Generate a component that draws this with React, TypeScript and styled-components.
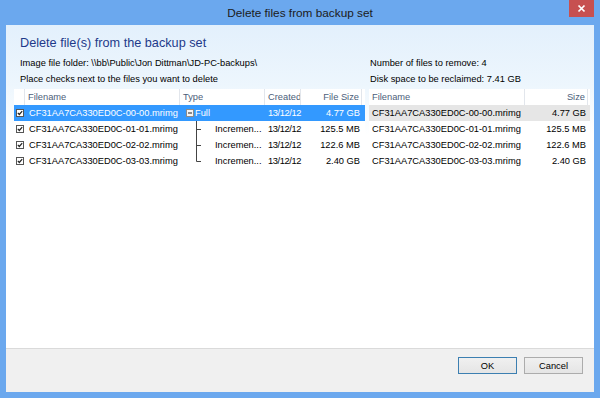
import React, { FC } from 'react';
import styled, { createGlobalStyle } from 'styled-components';

const GlobalStyle = createGlobalStyle`
    html, body {
        margin: 0;
        padding: 0;
    }
    body {
        font-family: "Segoe UI", "Liberation Sans", Arial, sans-serif;
    }
`;

const FONT = '9.3px';

const Window = styled.div`
    width: 600px;
    height: 398px;
    box-sizing: border-box;
    background: #6ba8ee;
    padding: 0 6px 6px 6px;
    display: flex;
    flex-direction: column;
`;

const TitleBar = styled.div`
    height: 25px;
    flex: none;
    display: grid;
    grid-template-columns: 1fr auto 1fr;
    align-items: start;
`;

const Title = styled.div`
    grid-column: 2;
    padding-top: 6px;
    line-height: 15px;
    font-size: 11.8px;
    color: #1b1b1b;
`;

const CloseButton = styled.div`
    grid-column: 3;
    justify-self: end;
    width: 25px;
    height: 17px;
    background: #c75050;
    display: flex;
`;

const Client = styled.div`
    flex: 1;
    display: flex;
    flex-direction: column;
    background: #fff;
    min-height: 0;
`;

const Main = styled.div`
    flex: 1;
    display: flex;
    flex-direction: column;
    padding: 10px 4px 0 8px;
    background: linear-gradient(to bottom, #e3f0fc 0px, #edf6fd 60px, #ffffff 110px);
    min-height: 0;
`;

const Heading = styled.h1`
    margin: 0;
    padding-left: 6px;
    font-size: 12.7px;
    font-weight: normal;
    line-height: 17px;
    color: #1e3a8a;
`;

const Info = styled.div`
    display: grid;
    grid-template-columns: 356px 1fr;
    margin-top: 3px;
    font-size: ${FONT};
    line-height: 16px;
    color: #000;
`;

const InfoCol = styled.div<{ indent?: boolean }>`
    padding-left: ${({ indent }) => (indent ? '6px' : '0')};
    white-space: nowrap;
`;

const Lists = styled.div`
    flex: 1;
    display: grid;
    grid-template-columns: 351px 221px;
    column-gap: 4px;
    margin-top: 2px;
`;

const List = styled.div`
    background: #fff;
    display: flex;
    flex-direction: column;
    font-size: ${FONT};
`;

const HeaderRow = styled.div<{ cols: string }>`
    display: grid;
    grid-template-columns: ${({ cols }) => cols};
    height: 16px;
    line-height: 16px;
    color: #4c607a;
`;

const HeaderCell = styled.div<{ right?: boolean; last?: boolean }>`
    border-right: ${({ last }) => (last ? 'none' : '1px solid #e2e6ec')};
    padding: 0 ${({ right }) => (right ? '2px' : '3px')};
    text-align: ${({ right }) => (right ? 'right' : 'left')};
    white-space: nowrap;
    overflow: hidden;
`;

const Row = styled.div<{ cols: string; tone?: 'selected' | 'grey' }>`
    display: grid;
    grid-template-columns: ${({ cols }) => cols};
    height: 16px;
    line-height: 16px;
    background: ${({ tone }) => (tone === 'selected' ? '#3399ff' : tone === 'grey' ? '#e6e6e6' : 'transparent')};
    color: ${({ tone }) => (tone === 'selected' ? '#fff' : '#000')};
`;

const Cell = styled.div<{ right?: boolean; pad?: number; spill?: boolean }>`
    display: flex;
    align-items: center;
    justify-content: ${({ right }) => (right ? 'flex-end' : 'flex-start')};
    padding-left: ${({ pad }) => (pad ?? 4)}px;
    padding-right: ${({ right }) => (right ? '2px' : '0')};
    white-space: nowrap;
    overflow: ${({ spill }) => (spill ? 'visible' : 'hidden')};
    letter-spacing: ${({ spill }) => (spill ? '-0.4px' : 'normal')};
`;

const Footer = styled.div`
    flex: none;
    height: 35px;
    border-top: 1px solid #dadada;
    background: #f0f0f0;
    display: flex;
    justify-content: flex-end;
    align-items: flex-start;
    gap: 7px;
    padding: 8px 11px 0 0;
`;

const Button = styled.button<{ primary?: boolean }>`
    width: 59px;
    height: 17px;
    box-sizing: border-box;
    padding: 0;
    border: 1px solid ${({ primary }) => (primary ? '#3c7fb1' : '#acacac')};
    background: linear-gradient(to bottom, #f0f0f0, #e5e5e5);
    font-family: inherit;
    font-size: ${FONT};
    color: #000;
`;

const LEFT_COLS = '11px 155px 85px 36px 61px 1fr';
const RIGHT_COLS = '156px 63px 1fr';

const files = [
    { name: 'CF31AA7CA330ED0C-00-00.mrimg', type: 'Full', created: '13/12/12', size: '4.77 GB' },
    { name: 'CF31AA7CA330ED0C-01-01.mrimg', type: 'Incremen...', created: '13/12/12', size: '125.5 MB' },
    { name: 'CF31AA7CA330ED0C-02-02.mrimg', type: 'Incremen...', created: '13/12/12', size: '122.6 MB' },
    { name: 'CF31AA7CA330ED0C-03-03.mrimg', type: 'Incremen...', created: '13/12/12', size: '2.40 GB' },
];

const CheckBox: FC = () => (
    <svg width="8" height="8" viewBox="0 0 8 8" style={{ marginLeft: 2 }}>
        <rect x="0.5" y="0.5" width="7" height="7" fill="#fff" stroke="#555" />
        <path d="M1.8 3.9 L3.3 5.5 L6.2 2.2" fill="none" stroke="#222" strokeWidth="1.2" />
    </svg>
);

const CollapseBox: FC = () => (
    <svg width="14" height="16" viewBox="0 0 14 16">
        <rect x="6.5" y="4.5" width="7" height="7" fill="#f4f4f4" stroke="#8a8a8a" />
        <path d="M8 8 H12" stroke="#222" />
    </svg>
);

const TreeLine: FC<{ last: boolean }> = ({ last }) => (
    <svg width="35" height="16" viewBox="0 0 35 16">
        <path d={`M16.5 0 V${last ? 8.5 : 16} M16.5 8.5 H21`} fill="none" stroke="#444" />
    </svg>
);

const App: FC = () => {
    return (
        <Window>
            <GlobalStyle />
            <TitleBar>
                <Title>Delete files from backup set</Title>
                <CloseButton>
                    <svg width="25" height="17" viewBox="0 0 25 17">
                        <path d="M9.5 5.5 L15.5 11.5 M15.5 5.5 L9.5 11.5" stroke="#fff" strokeWidth="1.7" />
                    </svg>
                </CloseButton>
            </TitleBar>
            <Client>
                <Main>
                    <Heading>Delete file(s) from the backup set</Heading>
                    <Info>
                        <InfoCol indent>
                            <div>Image file folder: \\bb\Public\Jon Dittman\JD-PC-backups\</div>
                            <div>Place checks next to the files you want to delete</div>
                        </InfoCol>
                        <InfoCol>
                            <div>Number of files to remove: 4</div>
                            <div>Disk space to be reclaimed: 7.41 GB</div>
                        </InfoCol>
                    </Info>
                    <Lists>
                        <List>
                            <HeaderRow cols={LEFT_COLS}>
                                <HeaderCell />
                                <HeaderCell>Filename</HeaderCell>
                                <HeaderCell>Type</HeaderCell>
                                <HeaderCell>Created</HeaderCell>
                                <HeaderCell right>File Size</HeaderCell>
                                <HeaderCell last />
                            </HeaderRow>
                            {files.map((f, i) => (
                                <Row cols={LEFT_COLS} tone={i === 0 ? 'selected' : undefined} key={f.name}>
                                    <Cell pad={0}>
                                        <CheckBox />
                                    </Cell>
                                    <Cell>{f.name}</Cell>
                                    <Cell pad={0}>
                                        {i === 0 ? <CollapseBox /> : <TreeLine last={i === files.length - 1} />}
                                        <span style={{ marginLeft: i === 0 ? 1 : 0 }}>{f.type}</span>
                                    </Cell>
                                    <Cell pad={3} spill>{f.created}</Cell>
                                    <Cell right>{f.size}</Cell>
                                    <Cell />
                                </Row>
                            ))}
                        </List>
                        <List>
                            <HeaderRow cols={RIGHT_COLS}>
                                <HeaderCell>Filename</HeaderCell>
                                <HeaderCell right>Size</HeaderCell>
                                <HeaderCell last />
                            </HeaderRow>
                            {files.map((f, i) => (
                                <Row cols={RIGHT_COLS} tone={i === 0 ? 'grey' : undefined} key={f.name}>
                                    <Cell pad={3}>{f.name}</Cell>
                                    <Cell right>{f.size}</Cell>
                                    <Cell />
                                </Row>
                            ))}
                        </List>
                    </Lists>
                </Main>
                <Footer>
                    <Button primary>OK</Button>
                    <Button>Cancel</Button>
                </Footer>
            </Client>
        </Window>
    );
};

export default App;
